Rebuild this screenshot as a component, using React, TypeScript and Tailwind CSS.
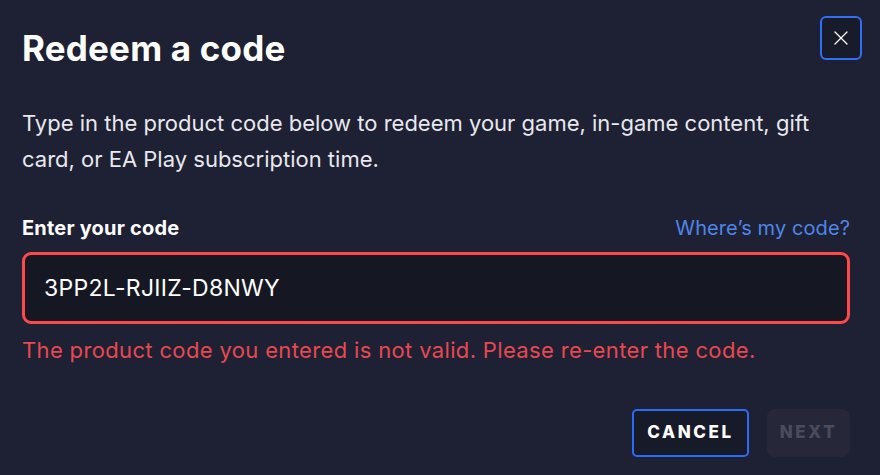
import { X } from "lucide-react";

export default function App() {
  return (
    <div className="w-[880px] h-[475px] bg-[#1e2033] font-['Inter',sans-serif] text-[#e8e8ee] pl-[22px] pr-[30px] overflow-hidden">
      <div className="flex items-start justify-between pt-[16px]">
        <h1 className="text-[35px] font-bold text-white leading-[40px] mt-[12px] tracking-[0.2px]">Redeem a code</h1>
        <button className="w-[42px] h-[44px] mr-[-12px] rounded-[6px] border-2 border-[#2f6ff5] bg-[#181b29] flex items-center justify-center">
          <X size={24} strokeWidth={1.3} className="text-white" />
        </button>
      </div>

      <p className="mt-[37px] text-[22px] leading-[36px] w-[830px]">
        Type in the product code below to redeem your game, in-game content, gift card, or EA Play subscription time.
      </p>

      <div className="mt-[36px] flex items-center justify-between">
        <span className="text-[20px] font-bold text-white tracking-[0.2px]">Enter your code</span>
        <a className="text-[20px] text-[#4f86ea] tracking-[0.1px]">Where’s my code?</a>
      </div>

      <div className="mt-[9px] h-[72px] rounded-[9px] border-[3px] border-[#ff4848] bg-[#151823] flex items-center px-[19px]">
        <span className="text-[23px] text-white tracking-[0.3px]">3PP2L-RJIIZ-D8NWY</span>
      </div>

      <p className="mt-[11px] text-[22px] leading-[30px] text-[#e84850] tracking-[0.35px]">
        The product code you entered is not valid. Please re-enter the code.
      </p>

      <div className="mt-[44px] flex justify-end gap-[18px]">
        <button className="w-[117px] h-[48px] rounded-[5px] border-2 border-[#2b6cf6] bg-[#171a28] text-white font-extrabold text-[17px] tracking-[2.6px]">
          CANCEL
        </button>
        <button className="w-[83px] h-[48px] rounded-[8px] bg-[#262839] text-[#4a4c5e] font-extrabold text-[17px] tracking-[2.6px]">
          NEXT
        </button>
      </div>
    </div>
  );
}
